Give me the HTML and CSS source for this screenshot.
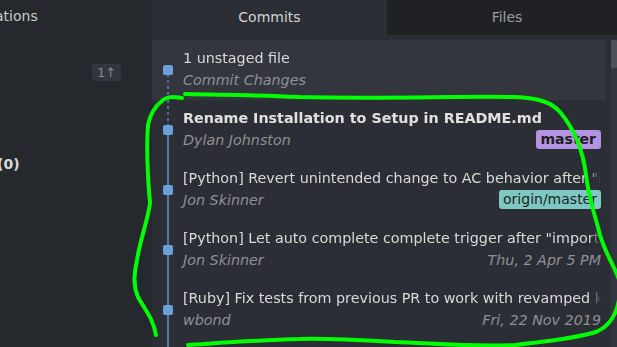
FILE: index.html
```html
<!DOCTYPE html>
<html>
<head>
<meta charset="utf-8">
<link rel="stylesheet" href="styles.css">
</head>
<body>
<div class="app">
  <aside class="sidebar">
    <div class="sb-title">ations</div>
    <div class="sb-remote"><span class="ahead">1↑</span></div>
    <div class="sb-stash">(0)</div>
  </aside>
  <main class="panel">
    <div class="tabs">
      <div class="tab active">Commits</div>
      <div class="tab files">Files</div>
    </div>
    <div class="list-wrap">
      <div class="list">
        <div class="row selected">
          <div class="graph g-unstaged"><span class="node"></span></div>
          <div class="info">
            <div class="line1"><span class="title">1 unstaged file</span></div>
            <div class="line2"><span class="author">Commit Changes</span></div>
          </div>
        </div>
        <div class="row">
          <div class="graph g-first"><span class="node"></span></div>
          <div class="info">
            <div class="line1"><span class="title bold">Rename Installation to Setup in README.md</span></div>
            <div class="line2"><span class="author">Dylan Johnston</span><span class="badge badge-master">master</span></div>
          </div>
        </div>
        <div class="row">
          <div class="graph g-solid"><span class="node"></span></div>
          <div class="info">
            <div class="line1"><span class="title">[Python] Revert unintended change to AC behavior after "import" completion</span></div>
            <div class="line2"><span class="author">Jon Skinner</span><span class="badge badge-origin">origin/master</span></div>
          </div>
        </div>
        <div class="row">
          <div class="graph g-solid"><span class="node"></span></div>
          <div class="info">
            <div class="line1"><span class="title">[Python] Let auto complete complete trigger after "import" keyword</span></div>
            <div class="line2"><span class="author">Jon Skinner</span><span class="date">Thu, 2 Apr 5 PM</span></div>
          </div>
        </div>
        <div class="row">
          <div class="graph g-solid"><span class="node"></span></div>
          <div class="info">
            <div class="line1"><span class="title">[Ruby] Fix tests from previous PR to work with revamped keywords</span></div>
            <div class="line2"><span class="author">wbond</span><span class="date">Fri, 22 Nov 2019</span></div>
          </div>
        </div>
        <div class="row">
          <div class="graph g-solid"><span class="node"></span></div>
          <div class="info">
            <div class="line1"><span class="title">[Ruby] Improve keyword handling</span></div>
            <div class="line2"><span class="author">wbond</span></div>
          </div>
        </div>
      </div>
      <div class="scrollbar"><div class="thumb"></div></div>
    </div>
  </main>
  <svg class="annot" width="617" height="347" viewBox="0 0 617 347">
    <g fill="none" stroke="#00ff00" stroke-width="4" stroke-linecap="round" stroke-linejoin="round">
      <path d="M185 94 C230 95 260 95 300 97 C380 99 460 96 515 97 C540 98 552 103 560 112 C575 130 583 150 586 175 C589 200 595 215 600 235 C606 255 614 265 620 282"/>
      <path d="M620 292 C618 315 608 327 596 332 C575 338 550 341 515 345 C470 347 430 343 395 342 C360 340 320 338 300 339 C260 340 220 343 188 345"/>
      <path d="M182 98 C175 97 168 96 163 100 C155 106 150 115 148 125 C146 150 148 180 150 203 C148 220 140 240 137 260 C134 275 133 285 138 297 C145 310 153 318 156 335"/>
    </g>
  </svg>
</div>
</body>
</html>
```

FILE: styles.css
```css
html, body {
  margin: 0;
  padding: 0;
}
body {
  width: 617px;
  height: 347px;
  overflow: hidden;
  background: #25282d;
  font-family: "DejaVu Sans", "Liberation Sans", sans-serif;
  font-size: 14px;
  color: #d6d6d6;
}
.app {
  position: relative;
  display: grid;
  grid-template-columns: 152px 1fr;
  height: 347px;
}
.sidebar {
  background: #25282d;
  display: flex;
  flex-direction: column;
  overflow: hidden;
}
.sb-title {
  height: 35px;
  line-height: 33px;
  font-size: 14px;
  color: #c9cacc;
  margin-left: -5px;
  white-space: nowrap;
}
.sb-remote {
  margin-top: 29px;
  display: flex;
  justify-content: flex-end;
  padding-right: 31px;
}
.ahead {
  display: inline-block;
  height: 17px;
  line-height: 17px;
  width: 29px;
  text-align: center;
  background: #33363c;
  color: #84878c;
  font-size: 13px;
  border-radius: 3px;
}
.sb-stash {
  margin-top: 73px;
  line-height: 20px;
  font-weight: bold;
  color: #d8d8d8;
  margin-left: -3px;
}
.panel {
  background: #2b2e34;
  display: flex;
  flex-direction: column;
  overflow: hidden;
}
.tabs {
  display: grid;
  grid-template-columns: 235px 1fr;
  height: 35px;
}
.tab {
  display: flex;
  align-items: center;
  justify-content: center;
  padding-bottom: 2px;
  background: #1f2125;
  color: #9a9da2;
  font-size: 14px;
}
.tab.files {
  padding-left: 10px;
}
.tab.active {
  background: #2b2e34;
  color: #d2d3d5;
}
.list-wrap {
  flex: 1;
  display: flex;
  overflow: hidden;
}
.list {
  flex: 1;
  padding-top: 5px;
  overflow: hidden;
  font-size: 14.3px;
}
.scrollbar {
  width: 6px;
  margin-left: 5px;
  margin-top: 5px;
  background: #33363c;
}
.thumb {
  height: 28px;
  background: #4e5157;
  border-radius: 1px;
}
.row {
  display: flex;
  height: 60px;
  padding-left: 1px;
}
.row.selected {
  background: #33363d;
}
.graph {
  flex: 0 0 30px;
  display: flex;
  align-items: center;
  justify-content: center;
  background-repeat: no-repeat;
}
.g-unstaged {
  background-image: repeating-linear-gradient(to bottom, #4a6f9a 0 3px, transparent 3px 6px);
  background-size: 2px 26px;
  background-position: center bottom;
}
.g-first {
  background-image:
    repeating-linear-gradient(to bottom, #4a6f9a 0 3px, transparent 3px 6px),
    linear-gradient(#4f79a9, #4f79a9);
  background-size: 2px 25px, 2px 26px;
  background-position: center top, center bottom;
}
.g-solid {
  background-image: linear-gradient(#4f79a9, #4f79a9);
  background-size: 2px 100%;
  background-position: center top;
}
.node {
  width: 10px;
  height: 10px;
  border-radius: 2px;
  background: #6f9fd9;
}
.info {
  flex: 1;
  min-width: 0;
  padding: 7px 5px 0 0;
}
.line1, .line2 {
  height: 22px;
  line-height: 22px;
  display: flex;
  align-items: center;
}
.title {
  display: block;
  flex: 1;
  min-width: 0;
  overflow: hidden;
  white-space: nowrap;
  color: #d9d9d9;
  -webkit-mask-image: linear-gradient(to right, #000 calc(100% - 12px), transparent);
  mask-image: linear-gradient(to right, #000 calc(100% - 12px), transparent);
}
.title.bold {
  font-weight: bold;
  color: #e0e0e0;
}
.author {
  font-style: italic;
  color: #8e9196;
  white-space: nowrap;
}
.date {
  margin-left: auto;
  font-style: italic;
  color: #8e9196;
  white-space: nowrap;
}
.badge {
  margin-left: auto;
  height: 19px;
  line-height: 19px;
  padding: 0 5px;
  border-radius: 3px;
  color: #1d1f23;
  white-space: nowrap;
  margin-top: -2px;
  font-size: 14px;
}
.badge-master {
  background: #b394e2;
  font-weight: bold;
}
.badge-origin {
  background: #7ec8c4;
  padding: 0 4px;
}
.annot {
  position: absolute;
  left: 0;
  top: 0;
  pointer-events: none;
}
```
